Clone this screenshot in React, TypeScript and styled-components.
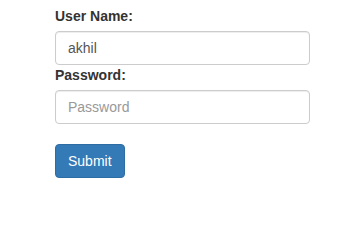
import React from "react";
import styled, { createGlobalStyle } from "styled-components";

const Global = createGlobalStyle`
  html, body { margin: 0; padding: 0; background: #fff; }
  body {
    font-family: "Liberation Sans", Arial, Helvetica, sans-serif;
    font-size: 14px;
    line-height: 20px;
    color: #333;
  }
  * { box-sizing: border-box; }
`;

const Form = styled.form`
  display: flex;
  flex-direction: column;
  align-items: flex-start;
  width: 255px;
  margin: 6px 0 0 55px;
`;

const Group = styled.div`
  display: flex;
  flex-direction: column;
  width: 100%;
`;

const Label = styled.label`
  font-weight: bold;
  line-height: 20px;
  margin-bottom: 5px;
`;

const Input = styled.input`
  display: block;
  width: 100%;
  height: 34px;
  padding: 6px 12px;
  font-family: inherit;
  font-size: 14px;
  line-height: 20px;
  color: #555;
  background: #fff;
  border: 1px solid #ccc;
  border-radius: 4px;
  box-shadow: inset 0 1px 1px rgba(0, 0, 0, 0.075);
  outline: none;
  &::placeholder { color: #999; opacity: 1; }
`;

const Button = styled.button`
  margin-top: 20px;
  height: 34px;
  padding: 6px 12px;
  font-family: inherit;
  font-size: 14px;
  line-height: 20px;
  color: #fff;
  background: #337ab7;
  border: 1px solid #2e6da4;
  border-radius: 4px;
  cursor: pointer;
`;

export default function App() {
  return (
    <>
      <Global />
      <Form onSubmit={(e) => e.preventDefault()}>
        <Group>
          <Label htmlFor="user">User Name:</Label>
          <Input id="user" type="text" defaultValue="akhil" />
        </Group>
        <Group>
          <Label htmlFor="pass">Password:</Label>
          <Input id="pass" type="password" placeholder="Password" />
        </Group>
        <Button type="submit">Submit</Button>
      </Form>
    </>
  );
}
